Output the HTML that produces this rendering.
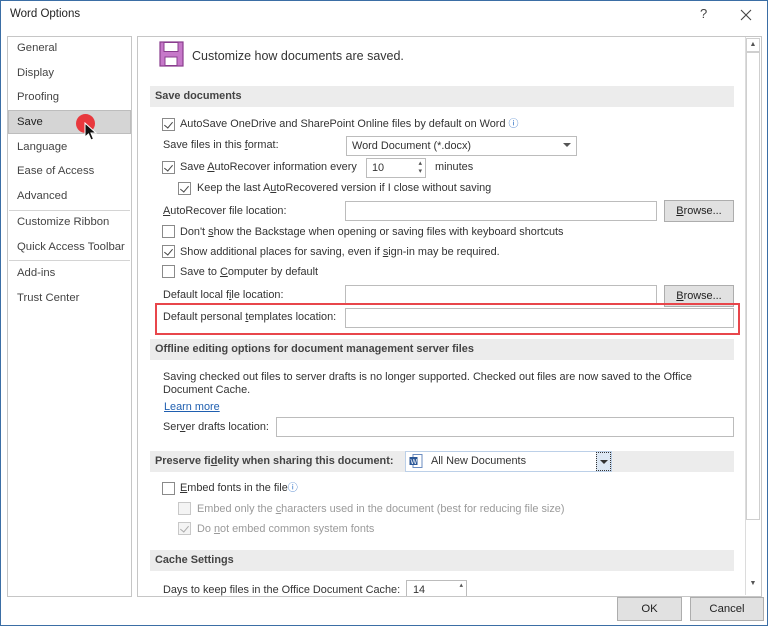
<!DOCTYPE html>
<html><head><style>
*{box-sizing:border-box;margin:0;padding:0}
body{width:768px;height:626px;overflow:hidden;background:#fff;font-family:"Liberation Sans",sans-serif;font-size:10.9px;color:#333;position:relative}
.a{position:absolute;white-space:nowrap}
.t{position:absolute;white-space:nowrap;line-height:14px}
.cb{position:absolute;width:13px;height:13px;border:1px solid #8a8a8a;background:#fff}
.cb.k::after{content:"";position:absolute;left:3px;top:1px;width:4px;height:7px;border:solid #444;border-width:0 1.3px 1.3px 0;transform:rotate(40deg)}
.cb.d{border-color:#c8c8c8;background:#f4f4f4}
.cb.d.k::after{border-color:#aaa}
.in{position:absolute;border:1px solid #bcbcbc;background:#fff}
.btn{position:absolute;border:1px solid #adadad;background:#e1e1e1;text-align:center;color:#222}
.hd{position:absolute;left:150px;width:584px;height:21px;background:#ececec;font-weight:bold;color:#444;padding-left:5px;line-height:21px}
.nav{position:absolute;left:17px;line-height:14px;color:#444;font-size:11.3px}
.g{color:#9a9a9a}
u{text-decoration:underline}
</style></head><body>
<div class="a" style="left:0;top:0;width:768px;height:626px;border:1px solid #3b6ea5"></div>
<div class="t" style="left:10px;top:7px;color:#222;font-size:11.5px">Word Options</div>
<div class="t" style="left:700px;top:7px;font-size:13px;color:#444">?</div>
<svg class="a" style="left:740px;top:9px" width="12" height="12"><path d="M1 1 L11 11 M11 1 L1 11" stroke="#444" stroke-width="1.1"/></svg>

<div class="a" style="left:7px;top:36px;width:125px;height:561px;border:1px solid #c6c6c6"></div>
<div class="a" style="left:8px;top:110px;width:123px;height:24px;background:#d5d5d5;border:1px solid #bdbdbd"></div>
<div class="nav" style="top:41px">General</div>
<div class="nav" style="top:66px">Display</div>
<div class="nav" style="top:90px">Proofing</div>
<div class="nav" style="top:115px;color:#222">Save</div>
<div class="a" style="left:76px;top:114px;width:19px;height:19px;border-radius:50%;background:#e8383d"></div>
<svg class="a" style="left:84px;top:122px" width="14" height="20"><path d="M1 1 L1 15 L4.5 12 L7 18 L9.5 17 L7 11 L12 11 Z" fill="#111" stroke="#fff" stroke-width="1"/></svg>
<div class="nav" style="top:140px">Language</div>
<div class="nav" style="top:164px">Ease of Access</div>
<div class="nav" style="top:189px">Advanced</div>
<div class="a" style="left:9px;top:210px;width:121px;height:1px;background:#d4d4d4"></div>
<div class="nav" style="top:215px">Customize Ribbon</div>
<div class="nav" style="top:240px">Quick Access Toolbar</div>
<div class="a" style="left:9px;top:260px;width:121px;height:1px;background:#d4d4d4"></div>
<div class="nav" style="top:266px">Add-ins</div>
<div class="nav" style="top:291px">Trust Center</div>

<div class="a" style="left:137px;top:36px;width:625px;height:561px;border:1px solid #c6c6c6"></div>
<svg class="a" style="left:159px;top:41px" width="26" height="26"><rect x="1" y="1" width="23" height="24" fill="#c678c9" stroke="#8a3d8e" stroke-width="1.2"/><rect x="5" y="1.5" width="14" height="9" fill="#fff" stroke="#8a3d8e"/><rect x="6" y="16" width="12" height="8.5" fill="#fff" stroke="#8a3d8e"/></svg>
<div class="t" style="left:192px;top:49px;font-size:12.5px;color:#333">Customize how documents are saved.</div>

<div class="hd" style="top:86px">Save documents</div>
<div class="cb k" style="left:162px;top:118px"></div>
<div class="t" style="left:180px;top:117px">AutoSave OneDrive and SharePoint Online files by default on Word <span style="color:#2f6fc4;font-size:10px">ⓘ</span></div>
<div class="t" style="left:163px;top:138px">Save files in this <u>f</u>ormat:</div>
<div class="in" style="left:346px;top:136px;width:231px;height:20px;padding:2px 5px;line-height:14px">Word Document (*.docx)<span style="position:absolute;right:5px;top:6px;border:4px solid transparent;border-top:4px solid #555;border-bottom:0"></span></div>
<div class="cb k" style="left:162px;top:161px"></div>
<div class="t" style="left:180px;top:160px">Save <u>A</u>utoRecover information every</div>
<div class="in" style="left:366px;top:158px;width:60px;height:20px;padding:2px 5px;line-height:14px">10<span style="position:absolute;right:3px;top:1px;font-size:7px;color:#555;line-height:8px">▴<br>▾</span></div>
<div class="t" style="left:435px;top:160px">minutes</div>
<div class="cb k" style="left:178px;top:182px"></div>
<div class="t" style="left:197px;top:181px">Keep the last A<u>u</u>toRecovered version if I close without saving</div>
<div class="t" style="left:163px;top:204px"><u>A</u>utoRecover file location:</div>
<div class="in" style="left:345px;top:201px;width:312px;height:20px"></div>
<div class="btn" style="left:664px;top:200px;width:70px;height:22px;line-height:20px"><u>B</u>rowse...</div>
<div class="cb" style="left:162px;top:225px"></div>
<div class="t" style="left:180px;top:225px">Don't <u>s</u>how the Backstage when opening or saving files with keyboard shortcuts</div>
<div class="cb k" style="left:162px;top:245px"></div>
<div class="t" style="left:180px;top:245px">Show additional places for saving, even if <u>s</u>ign-in may be required.</div>
<div class="cb" style="left:162px;top:265px"></div>
<div class="t" style="left:180px;top:265px">Save to <u>C</u>omputer by default</div>
<div class="t" style="left:163px;top:288px">Default local f<u>i</u>le location:</div>
<div class="in" style="left:345px;top:285px;width:312px;height:20px"></div>
<div class="btn" style="left:664px;top:285px;width:70px;height:22px;line-height:20px"><u>B</u>rowse...</div>
<div class="t" style="left:163px;top:310px">Default personal <u>t</u>emplates location:</div>
<div class="in" style="left:345px;top:308px;width:389px;height:20px"></div>
<div class="a" style="left:155px;top:303px;width:585px;height:32px;border:2px solid #e8464b"></div>

<div class="hd" style="top:339px">Offline editing options for document management server files</div>
<div class="t" style="left:163px;top:370px">Saving checked out files to server drafts is no longer supported. Checked out files are now saved to the Office</div>
<div class="t" style="left:163px;top:383px">Document Cache.</div>
<div class="t" style="left:164px;top:400px;color:#1f5fb0"><u>Learn more</u></div>
<div class="t" style="left:163px;top:420px">Ser<u>v</u>er drafts location:</div>
<div class="in" style="left:276px;top:417px;width:458px;height:20px"></div>

<div class="hd" style="top:451px">Preserve fi<u>d</u>elity when sharing this document:</div>
<div class="in" style="left:405px;top:451px;width:207px;height:21px;border-color:#bcd0e8;padding:2px 0 0 25px;line-height:15px">All New Documents</div>
<svg class="a" style="left:409px;top:454px" width="14" height="14"><rect x="4" y="0.5" width="9" height="13" fill="#fff" stroke="#6b8cc0"/><rect x="0.5" y="3" width="8" height="8" fill="#2b5797"/><text x="1.5" y="10" font-size="7" fill="#fff" font-family="Liberation Sans">W</text></svg>
<div class="a" style="left:596px;top:452px;width:15px;height:19px;border:1px dotted #333;background:#dde8f4"><span style="position:absolute;left:3px;top:7px;border:4px solid transparent;border-top:4px solid #333;border-bottom:0"></span></div>
<div class="cb" style="left:162px;top:482px"></div>
<div class="t" style="left:180px;top:481px"><u>E</u>mbed fonts in the file<span style="color:#2f6fc4;font-size:10px">ⓘ</span></div>
<div class="cb d" style="left:178px;top:502px"></div>
<div class="t g" style="left:197px;top:502px">Embed only the <u>c</u>haracters used in the document (best for reducing file size)</div>
<div class="cb d k" style="left:178px;top:522px"></div>
<div class="t g" style="left:197px;top:522px">Do <u>n</u>ot embed common system fonts</div>

<div class="hd" style="top:550px">Cache Settings</div>
<div class="t" style="left:163px;top:583px">Days to keep files in the Office Document Cache:</div>
<div class="in" style="left:406px;top:580px;width:61px;height:20px;padding:2px 6px;line-height:14px">14<span style="position:absolute;right:3px;top:1px;font-size:7px;color:#555;line-height:8px">▴</span></div>
<div class="a" style="left:138px;top:596px;width:623px;height:29px;background:#fff"></div>
<div class="a" style="left:137px;top:596px;width:625px;height:1px;background:#c6c6c6"></div>

<div class="a" style="left:745px;top:37px;width:16px;height:558px;background:#fff;border-left:1px solid #dcdcdc"></div>
<div class="a" style="left:746px;top:38px;width:14px;height:14px;border:1px solid #cfcfcf;font-size:7px;text-align:center;line-height:12px;color:#555">▲</div>
<div class="a" style="left:746px;top:52px;width:14px;height:468px;border:1px solid #cfcfcf;background:#fff"></div>
<div class="a" style="left:746px;top:577px;width:14px;height:14px;font-size:7px;text-align:center;line-height:14px;color:#555">▼</div>

<div class="btn" style="left:617px;top:597px;width:65px;height:24px;line-height:22px;font-size:11.3px">OK</div>
<div class="btn" style="left:690px;top:597px;width:74px;height:24px;line-height:22px;font-size:11.3px">Cancel</div>
</body></html>
